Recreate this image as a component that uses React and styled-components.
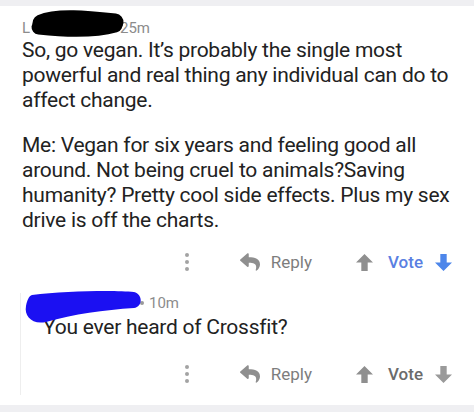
import React from "react";
import styled, { createGlobalStyle } from "styled-components";
import { FaReply } from "react-icons/fa";

const Global = createGlobalStyle`
  html, body { margin: 0; padding: 0; background: #fff; }
  body { font-family: Roboto, "Noto Sans", "Liberation Sans", sans-serif; }
  * { box-sizing: border-box; }
`;

const Page = styled.div`
  width: 474px;
  height: 412px;
  display: flex;
  flex-direction: column;
  overflow: hidden;
  background: #fff;
`;

const Band = styled.div`
  height: ${(p) => p.$h}px;
  flex: none;
  background: #efeff2;
  margin-top: ${(p) => p.$mt || 0}px;
`;

const Comment = styled.div`
  padding: 0 22px 0 ${(p) => (p.$flush ? 0 : 22)}px;
`;

const Meta = styled.div`
  position: relative;
  display: flex;
  align-items: baseline;
  height: 20px;
  font-size: 15px;
  line-height: 20px;
  color: #8c8c8c;
  margin-top: ${(p) => p.$mt || 0}px;
`;

const Name = styled.span`
  display: inline-block;
  width: ${(p) => p.$w}px;
  overflow: hidden;
  white-space: nowrap;
`;

const Dot = styled.span`
  display: inline-block;
  width: 4px;
  height: 4px;
  border-radius: 50%;
  background: #9a9a9a;
  margin: 0 5px 0 2px;
  transform: translateY(-3px);
`;

const Scribble = styled.svg`
  position: absolute;
  left: ${(p) => p.$x}px;
  top: ${(p) => p.$y}px;
  overflow: visible;
  pointer-events: none;
`;

const Body = styled.p`
  margin: ${(p) => p.$mt || 0}px 0 0 0;
  font-size: 21px;
  line-height: 25px;
  color: #222;
  letter-spacing: -0.25px;
`;

const Actions = styled.div`
  display: flex;
  align-items: center;
  justify-content: flex-end;
  height: 24px;
  margin-top: ${(p) => p.$mt}px;
  font-size: 17px;
  line-height: 24px;
  color: #7d7d7d;
`;

const MoreDots = styled.div`
  display: flex;
  flex-direction: column;
  gap: 3px;
  margin-right: 51px;
  span {
    width: 4px;
    height: 4px;
    border-radius: 50%;
    background: #a3a3a3;
  }
`;

const ReplyBtn = styled.div`
  display: flex;
  align-items: center;
  gap: 11px;
  margin-right: 44px;
  svg {
    color: #8f8f8f;
  }
`;

const VoteGroup = styled.div`
  display: flex;
  align-items: center;
`;

const VoteLabel = styled.span`
  font-weight: 500;
  color: ${(p) => (p.$active ? "#5a7fe2" : "#6b6b6b")};
  margin: 0 12px 0 15px;
`;

const Nested = styled.div`
  margin: 19px 0 0 20px;
  border-left: 1px solid #eeeeee;
  padding: 0 0 9px 22px;
`;

function Arrow({ down, color }) {
  return (
    <svg width="17" height="17" viewBox="0 0 16 16" style={{ transform: down ? "rotate(180deg)" : "none" }}>
      <path d="M8 0 L16 8 L11 8 L11 16 L5 16 L5 8 L0 8 Z" fill={color} />
    </svg>
  );
}

function ActionsRow({ mt, active }) {
  return (
    <Actions $mt={mt}>
      <MoreDots>
        <span />
        <span />
        <span />
      </MoreDots>
      <ReplyBtn>
        <FaReply size={20} />
        <span>Reply</span>
      </ReplyBtn>
      <VoteGroup>
        <Arrow color="#8f8f8f" />
        <VoteLabel $active={active}>Vote</VoteLabel>
        <Arrow down color={active ? "#4d86ea" : "#9a9a9a"} />
      </VoteGroup>
    </Actions>
  );
}

export default function App() {
  return (
    <>
      <Global />
      <Page>
        <Band $h={6} />
        <Comment>
          <Meta $mt={12}>
            <Name $w={98}>L</Name>
            <span>25m</span>
            <Scribble $x={5} $y={-5} width="100" height="26">
              <path d="M14 10 C 30 3, 60 6, 88 9" stroke="#000" strokeWidth="17" strokeLinecap="round" fill="none" />
              <path d="M12 14 C 40 17, 70 17, 88 12" stroke="#000" strokeWidth="15" strokeLinecap="round" fill="none" />
            </Scribble>
          </Meta>
          <Body>
            So, go vegan. It’s probably the single most powerful and real thing any individual can do to affect change.
          </Body>
          <Body $mt={20}>
            Me: Vegan for six years and feeling good all around. Not being cruel to animals?Saving humanity? Pretty cool side effects. Plus my sex drive is off the charts.
          </Body>
          <ActionsRow mt={17} active />
        </Comment>
        <Comment $flush>
          <Nested>
            <Meta>
              <Name $w={95} />
              <Dot />
              <span>10m</span>
              <Scribble $x={-19} $y={0} width="120" height="30">
                <path
                  d="M8 2 C 40 -2, 90 -3, 110 -1 C 119 1, 119 14, 110 15 C 80 17, 50 21, 22 29 C 8 32, 0 23, 2 13 C 3 7, 5 3, 8 2 Z"
                  fill="#1b10f2"
                />
              </Scribble>
            </Meta>
            <Body $mt={2}>You ever heard of Crossfit?</Body>
            <ActionsRow mt={22} />
          </Nested>
        </Comment>
        <Band $h={7} $mt={10} />
      </Page>
    </>
  );
}
